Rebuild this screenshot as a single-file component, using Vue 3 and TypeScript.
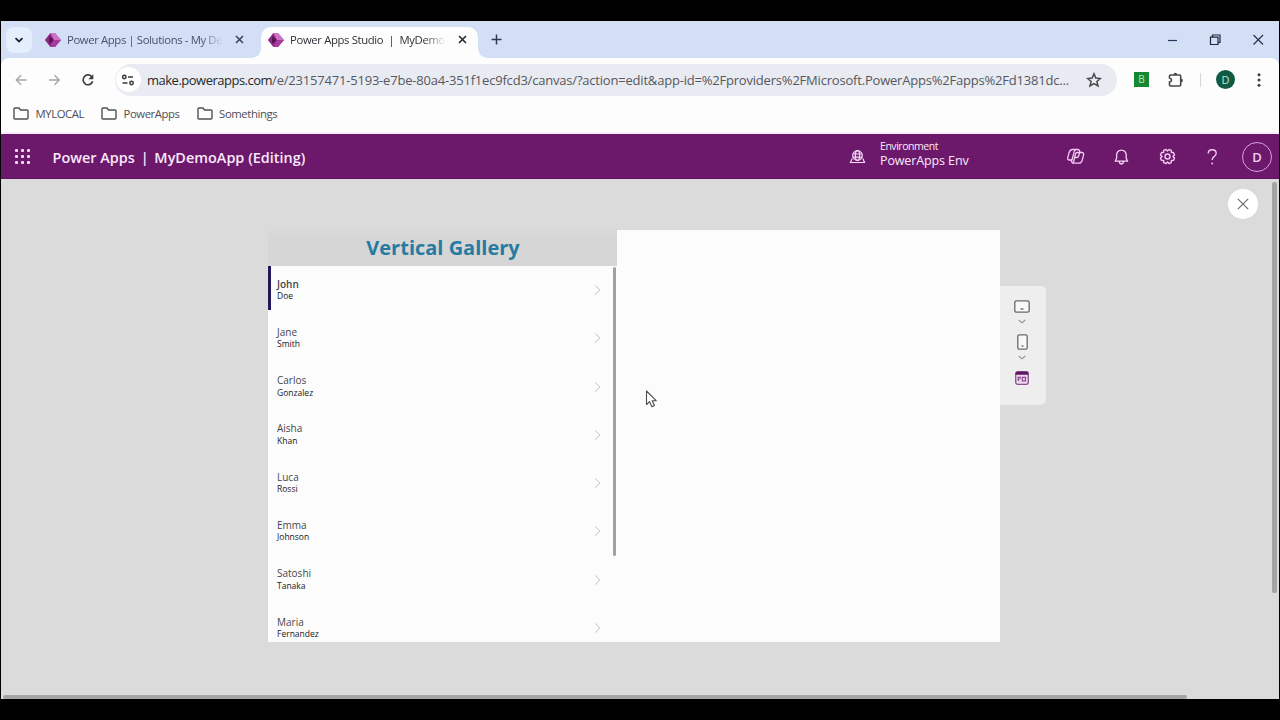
<script setup lang="ts">
interface Person { first: string; last: string }

const people: Person[] = [
  { first: 'John', last: 'Doe' },
  { first: 'Jane', last: 'Smith' },
  { first: 'Carlos', last: 'Gonzalez' },
  { first: 'Aisha', last: 'Khan' },
  { first: 'Luca', last: 'Rossi' },
  { first: 'Emma', last: 'Johnson' },
  { first: 'Satoshi', last: 'Tanaka' },
  { first: 'Maria', last: 'Fernandez' },
]
const selected = 0
const bookmarks: string[] = ['MYLOCAL', 'PowerApps', 'Somethings']
const waffle = [0, 1, 2, 3, 4, 5, 6, 7, 8]
const url = '/e/23157471-5193-e7be-80a4-351f1ec9fcd3/canvas/?action=edit&app-id=%2Fproviders%2FMicrosoft.PowerApps%2Fapps%2Fd1381dc...'
</script>

<template>
  <div class="screen">
    <div class="tabs">
      <button class="tab-search"><svg width="10" height="8" viewBox="0 0 10 8"><path d="M1.500 2.200 5 5.500 8.500 2.200" fill="none" stroke="#1d2430" stroke-width="1.800" /></svg></button>
      <div class="tab idle">
        <svg class="logo" width="16" height="16" viewBox="0 0 16 16"><path d="M5.500 1h4.500l6 7-6 7H5.500L0 8z" fill="#b44bae" /><path d="M5.500 1 0 8l5.500 7L9 8z" fill="#8d2b86" /><path d="M4 4v8l5-4z" fill="#5c1257" /><path d="m10 1 6 7H9L5.500 1z" fill="#cc70c8" /><path d="M9 8h7l-6 7H5.500z" fill="#a63a9e" /></svg>
        <span class="tab-text t1">Power Apps | Solutions - My De</span>
        <svg class="x" width="9" height="9" viewBox="0 0 9 9"><path d="m1 1 7 7M8 1 1 8" stroke="#39465e" stroke-width="1.600" /></svg>
      </div>
      <div class="tab active">
        <svg class="logo" width="16" height="16" viewBox="0 0 16 16"><path d="M5.500 1h4.500l6 7-6 7H5.500L0 8z" fill="#b44bae" /><path d="M5.500 1 0 8l5.500 7L9 8z" fill="#8d2b86" /><path d="M4 4v8l5-4z" fill="#5c1257" /><path d="m10 1 6 7H9L5.500 1z" fill="#cc70c8" /><path d="M9 8h7l-6 7H5.500z" fill="#a63a9e" /></svg>
        <span class="tab-text t2">Power Apps Studio &nbsp;|&nbsp; MyDemo</span>
        <svg class="x" width="9" height="9" viewBox="0 0 9 9"><path d="m1 1 7 7M8 1 1 8" stroke="#272b33" stroke-width="1.700" /></svg>
      </div>
      <svg class="plus" width="11" height="11" viewBox="0 0 11 11"><path d="M5.500 .5v10M.5 5.500h10" stroke="#303a4e" stroke-width="1.500" /></svg>
      <div class="window">
        <svg width="43" height="20" viewBox="0 0 43 20"><path d="M18 10.500h9" stroke="#27365c" stroke-width="1.200" /></svg>
        <svg width="43" height="20" viewBox="0 0 43 20"><path d="M17.500 7.200H25v7.300h-7.500zM19.500 7.200V5H27v7.500h-2" fill="none" stroke="#1f2438" stroke-width="1.200" /></svg>
        <svg width="43" height="20" viewBox="0 0 43 20"><path d="m17.500 5 9.500 9.500M27 5l-9.500 9.500" stroke="#27314c" stroke-width="1.200" /></svg>
      </div>
    </div>

    <div class="toolbar">
      <svg class="nav" width="34" height="20" viewBox="0 0 34 20"><path d="M25.500 10H15.500M20 5.300 15.300 10l4.700 4.700" fill="none" stroke="#a5a5a8" stroke-width="1.400" /></svg>
      <svg class="nav" width="34" height="20" viewBox="0 0 34 20"><path d="M14 10h10M19.500 5.300l4.700 4.700-4.700 4.700" fill="none" stroke="#a5a5a8" stroke-width="1.400" /></svg>
      <svg class="nav" width="34" height="20" viewBox="0 0 34 20"><path d="M22.800 6.700A4.900 4.900 0 1 0 23.700 11.300" fill="none" stroke="#3e3e42" stroke-width="1.700" /><path d="M24.300 4.300v5h-5z" fill="#3e3e42" /></svg>
      <div class="omnibox">
        <span class="site"><svg width="14" height="12" viewBox="0 0 14 12"><g fill="none" stroke="#37383c" stroke-width="1.500"><circle cx="3.300" cy="3" r="1.700" /><path d="M7 3h5M1.500 9h5" /><circle cx="10.500" cy="9" r="1.700" /></g></svg></span>
        <span class="url"><span class="host">make.powerapps.com</span>{{ url }}</span>
        <svg class="star" width="16" height="16" viewBox="0 0 16 16"><path d="m8 1.800 1.800 4.300 4.600.4-3.500 3 1.100 4.500-4-2.400L4 14l1.100-4.500-3.500-3 4.600-.4z" fill="none" stroke="#46484e" stroke-width="1.500" /></svg>
      </div>
      <span class="ext">B</span>
      <svg class="puzzle" width="18" height="18" viewBox="0 0 18 18"><path d="M3 4h9.500q1.200 0 1.200 1.200v8.600q0 1.200-1.200 1.200H3.500q-1 0-1-1v-3q2-.3 2-2t-2-2V5q0-1 1-1z" fill="none" stroke="#47484c" stroke-width="1.600" /><path d="M6.600 4q0-2.200 1.800-2.200T10.200 4zM13.500 7.500q2.400 0 2.400 1.900t-2.400 1.900z" fill="#47484c" /></svg>
      <i class="divider" />
      <span class="avatar">D</span>
      <svg class="more" width="4" height="16" viewBox="0 0 4 16"><g fill="#3c3d41"><circle cx="2" cy="2.800" r="1.500" /><circle cx="2" cy="8" r="1.500" /><circle cx="2" cy="13.200" r="1.500" /></g></svg>
    </div>

    <div class="bookmarks">
      <div v-for="b in bookmarks" :key="b" class="bookmark">
        <svg width="16" height="13" viewBox="0 0 16 13"><path d="M1 2q0-1 1-1h4l1.600 2H14q1 0 1 1v7q0 1-1 1H2q-1 0-1-1z" fill="none" stroke="#515257" stroke-width="1.400" /></svg>
        <span>{{ b }}</span>
      </div>
    </div>

    <header class="header">
      <div class="waffle"><i v-for="d in waffle" :key="d" /></div>
      <h1>Power Apps <b>|</b> MyDemoApp (Editing)</h1>
      <div class="env">
        <svg width="17" height="16" viewBox="0 0 17 16"><g fill="none" stroke="#f6d9f6" stroke-width="1.200"><circle cx="8.500" cy="6.500" r="4.800" /><ellipse cx="8.500" cy="6.500" rx="2.100" ry="4.800" /><path d="M3.900 5h9.200M3.900 8.200h9.200M3.200 9.500 1.500 13.500h14l-1.700-4" /></g></svg>
        <div class="env-text"><small>Environment</small><span>PowerApps Env</span></div>
      </div>
      <div class="actions">
        <svg width="46" height="20" viewBox="0 0 46 20"><g fill="none" stroke="#f0caf0" stroke-width="1.300" stroke-linejoin="round"><path d="M20.500 2.500h5.300q1.300 0 1.800 1.500l.5 1.500h1.600q2.500 0 1.800 2.700l-1.200 4.600q-.9 3.400-3.500 3.400h-5.300q-1.300 0-1.800-1.500l-.5-1.700h-1.700q-2.400 0-1.700-2.700L17 5.800q.9-3.300 3.500-3.300z" /><path d="M24.200 2.500q-1.500.2-2 2.200l-2.200 8.300h-1.500M28.100 5.500h-2.800q-1.400 0-1.800 1.500l-1.700 7q-.4 1.700-1.300 2.200M22.500 10.500h2.200q1.500 0 1.900-1.500l1-3.500" /></g></svg>
        <svg width="46" height="20" viewBox="0 0 46 20"><path d="M17.200 14.200h12.400l-1.400-3V7.900a4.800 4.800 0 0 0-9.600 0v3.300zM21.200 14.400q.3 2.500 2.200 2.500t2.200-2.500" fill="none" stroke="#f4d5f4" stroke-width="1.300" stroke-linejoin="round" /></svg>
        <svg width="46" height="20" viewBox="0 0 46 20"><g transform="translate(.5 -.3)" fill="none" stroke="#f0caf0" stroke-width="1.400" stroke-linejoin="round"><path d="m21.500 2.800 1.500 1.500 1.500-1.500 2.300.9v2.100h2.200l1 2.400-1.600 1.500L30 11.400l-1 2.300h-2.200v2.200l-2.300.9-1.500-1.600-1.500 1.600-2.300-.9v-2.200H17l-1-2.300 1.600-1.700L16 8.200l1-2.400h2.200V3.700z" /><circle cx="23" cy="9.800" r="2.500" /></g></svg>
        <svg width="44" height="20" viewBox="0 0 44 20"><path d="M18.200 6.500q.1-3.800 4-3.800 4 0 4 3.600 0 1.900-2.100 3.300-1.900 1.300-1.900 3.500" fill="none" stroke="#f0caf0" stroke-width="1.400" /><circle cx="22.200" cy="16.500" r="1" fill="#e6b4e6" /></svg>
        <span class="user">D</span>
      </div>
    </header>

    <main class="stage">
      <section class="canvas">
        <div class="left">
          <h2>Vertical Gallery</h2>
          <div class="gallery">
            <ul>
              <li v-for="(p, i) in people" :key="p.last" :class="{ selected: i === selected }">
                <div><p class="first">{{ p.first }}</p><p class="last">{{ p.last }}</p></div>
                <svg width="7" height="12" viewBox="0 0 7 12"><path d="m1.200 1.300 4.500 4.700-4.500 4.700" fill="none" stroke="#c0c0c2" stroke-width="1" /></svg>
              </li>
            </ul>
            <i class="thumb" />
          </div>
        </div>
      </section>
      <aside class="devices">
        <svg class="tablet" width="16" height="13" viewBox="0 0 16 13"><rect x=".8" y=".8" width="14.400" height="11.400" rx="1.800" fill="#f8f8f8" stroke="#69696c" stroke-width="1.300" /><path d="M6.500 9h3" stroke="#555" stroke-width="1.200" /></svg>
        <svg class="chev" width="8" height="5" viewBox="0 0 8 5"><path d="m.7.8 3.300 3 3.300-3" fill="none" stroke="#8b8b8d" stroke-width="1.100" /></svg>
        <svg class="phone" width="11" height="16" viewBox="0 0 11 16"><rect x=".8" y=".8" width="9.400" height="14.400" rx="1.600" fill="#f8f8f8" stroke="#69696c" stroke-width="1.300" /><path d="M4.500 12h2" stroke="#555" stroke-width="1.200" /></svg>
        <svg class="chev" width="8" height="5" viewBox="0 0 8 5"><path d="m.7.8 3.300 3 3.300-3" fill="none" stroke="#8b8b8d" stroke-width="1.100" /></svg>
        <svg class="custom" width="14" height="14" viewBox="0 0 14 14"><rect x=".7" y=".7" width="12.600" height="12.600" rx="2" fill="#ead7eb" stroke="#8b5190" stroke-width="1.300" /><path d="M.7 3.800V2.500q0-1.800 1.800-1.800h9q1.800 0 1.800 1.800v1.300z" fill="#5d1764" /><path d="M6 6.300H3.200V10M3.200 8h2.300M7.300 6.300h3.200v3.500H7.300z" fill="none" stroke="#8d4a94" stroke-width="1.200" /></svg>
      </aside>
      <button class="close"><svg width="12" height="12" viewBox="0 0 12 12"><path d="m.8.8 10.400 10.400M11.200.8.8 11.200" stroke="#69666b" stroke-width="1.100" /></svg></button>
      <i class="vbar" /><i class="hbar" />
      <svg class="cursor" width="13" height="19" viewBox="0 0 13 19"><path d="M1.500 1v13.500l3.100-2.900 2.300 5.200 2.600-1.200-2.300-4.900h4z" fill="#fff" stroke="#4d4d50" stroke-width="1.100" stroke-linejoin="round" /></svg>
    </main>
  </div>
</template>

<style>
html, body { background: #000; overflow: hidden; }
</style>

<style scoped>
* { box-sizing: border-box; }
svg { flex: none; display: block; }
button { border: 0; padding: 0; display: flex; align-items: center; justify-content: center; }
.screen { width: 1280px; height: 720px; padding: 21px 1px; background: #000; font-family: "Open Sans", "Noto Sans", sans-serif; display: flex; flex-direction: column; overflow: hidden; }
.tabs { height: 45px; flex: none; margin-bottom: -8px; padding-bottom: 8px; background: #d2dff5; display: flex; align-items: center; }
.tab-search { width: 26px; height: 26px; margin-left: 5px; border-radius: 8px; background: #e5eefd; }
.tab { display: flex; align-items: center; height: 31px; font-size: 11.300px; color: #45526b; }
.idle { width: 218px; margin-left: 11px; padding-left: 2px; }
.active { position: relative; width: 217px; height: 31px; align-self: flex-end; padding: 0 0 6px 7px; border-radius: 10px 10px 0 0; background: #fdfdfe; color: #303137; }
.active::before, .active::after { content: ""; position: absolute; bottom: 0; width: 9px; height: 9px; }
.active::before { left: -9px; background: radial-gradient(circle at 0 0, transparent 8.500px, #fdfdfe 9px); }
.active::after { right: -9px; background: radial-gradient(circle at 100% 0, transparent 8.500px, #fdfdfe 9px); }
.tab-text { width: 156px; margin-left: 6px; white-space: nowrap; overflow: hidden; -webkit-mask-image: linear-gradient(90deg, #000 86%, transparent 100%); }
.t1 { letter-spacing: -.37px; }
.t2 { letter-spacing: -.35px; }
.x { margin-left: 12px; }
.plus { margin-left: 13px; }
.window { margin-left: auto; display: flex; }
.toolbar { position: relative; height: 43px; flex: none; background: #fdfdfe; border-radius: 8px 8px 0 0; display: flex; align-items: center; }
.omnibox { width: 1002px; height: 32px; margin-left: 12px; border-radius: 16px; background: #e9ebf2; display: flex; align-items: center; }
.site { width: 25px; height: 25px; margin-left: .5px; border-radius: 50%; background: #fff; display: flex; align-items: center; justify-content: center; }
.url { width: 924px; margin-left: 6.500px; font-size: 13px; letter-spacing: -.2px; color: #56585e; white-space: nowrap; }
.host { color: #27292d; letter-spacing: -.5px; }
.star { margin-left: 15px; }
.ext { width: 15px; height: 15px; margin-left: 17px; background: #158832; color: #b9e6c1; font-size: 10px; line-height: 15px; text-align: center; }
.puzzle { margin-left: 18px; }
.divider { width: 1px; height: 14px; margin-left: 15px; background: #d5d7de; }
.avatar { width: 19px; height: 19px; margin-left: 15px; border-radius: 50%; background: #0f5a42; color: #c7e6d8; font-size: 11px; line-height: 19px; text-align: center; }
.more { margin-left: 22px; }
.bookmarks { height: 33px; flex: none; background: #fdfdfe; border-bottom: 2px solid #faecfb; display: flex; align-items: center; padding: 0 0 6px 12px; font-size: 11.300px; letter-spacing: -.4px; color: #4d4e54; }
.bookmark { display: flex; align-items: center; gap: 6.500px; margin-right: 17px; }
.bookmark span { white-space: nowrap; }
.header { height: 45px; flex: none; background: #6c196c; display: flex; align-items: center; color: #fbe9fb; border-bottom: 1px solid #601460; }
.waffle { width: 15px; margin-left: 13.500px; display: grid; grid-template-columns: repeat(3, 3px); gap: 3px; }
.waffle i { width: 3px; height: 3px; background: #f5dcf5; border-radius: 1px; }
h1 { width: 400px; margin: 2px 0 0 23px; font-size: 14.400px; letter-spacing: .03px; font-weight: 600; white-space: nowrap; }
h1 b { font-weight: 600; margin: 0 2px; }
.env { width: 180px; margin-left: 396px; display: flex; align-items: center; }
.env > svg { margin-top: 1px; }
.env-text { margin: -5px 0 0 14px; display: flex; flex-direction: column; white-space: nowrap; }
.env-text small { font-size: 10.500px; line-height: 14px; letter-spacing: -.45px; }
.env-text span { font-size: 12.500px; line-height: 16px; letter-spacing: -.12px; }
.env-text small, .env-text span { padding-left: .5px; }
.actions { margin-left: auto; display: flex; align-items: center; }
.actions svg { margin-top: 1px; }
.user { width: 30px; height: 30px; margin: 1px 7px 0 8px; border: 1.500px solid #d9a2de; border-radius: 50%; font-size: 13px; font-weight: 600; line-height: 28px; text-align: center; color: #edcff3; }
.stage { position: relative; flex: 1; min-height: 0; background: #dbdbdc; display: flex; align-items: flex-start; padding: 51px 0 0 267px; }
.canvas { width: 732px; height: 412px; background: #fcfcfd; overflow: hidden; display: flex; }
.left { width: 349px; }
h2 { height: 36px; margin: 0; padding-left: 1px; background: linear-gradient(#dadadb, #d6d6d7 20%); color: #267ba2; font-size: 20px; font-weight: 700; line-height: 35px; text-align: center; white-space: nowrap; }
.gallery { display: flex; align-items: flex-start; }
ul { list-style: none; width: 345px; margin: 0; padding: 0; }
li { height: 44px; margin-bottom: 4.300px; padding: 0 12px 0 9px; display: flex; justify-content: space-between; align-items: center; }
li.selected { border-left: 3px solid #22195a; padding-left: 6px; }
li svg { margin-top: 4px; }
p { margin: 0; white-space: nowrap; }
.first { font-size: 10px; line-height: 13px; padding-top: 3px; color: #46464a; }
.last { font-size: 8.500px; line-height: 11px; margin-top: -.5px; margin-bottom: .5px; color: #18181c; }
.selected .first { font-weight: 600; }
.thumb { width: 3px; height: 289px; margin-top: 1px; border-radius: 2px; background: #a1a1a3; }
.devices { width: 46px; height: 119px; margin-top: 56px; background: #eeeeef; border-radius: 0 5px 5px 0; display: flex; flex-direction: column; align-items: center; padding: 14px 2px 0 0; }
.chev { margin-top: 6px; }
.phone { margin-top: 10px; }
.phone + .chev { margin-top: 5px; }
.custom { margin-top: 11px; }
.close { position: absolute; top: 10px; right: 21.500px; width: 30px; height: 30px; border-radius: 50%; background: #fff; }
.vbar { position: absolute; right: 2px; top: 3px; width: 5px; height: 411px; border-radius: 2px; background: #a4a4a5; }
.hbar { position: absolute; left: 2px; bottom: 0; width: 1184px; height: 4px; border-radius: 2px; background: #a4a4a5; }
.cursor { position: absolute; left: 644px; top: 211px; }
</style>
